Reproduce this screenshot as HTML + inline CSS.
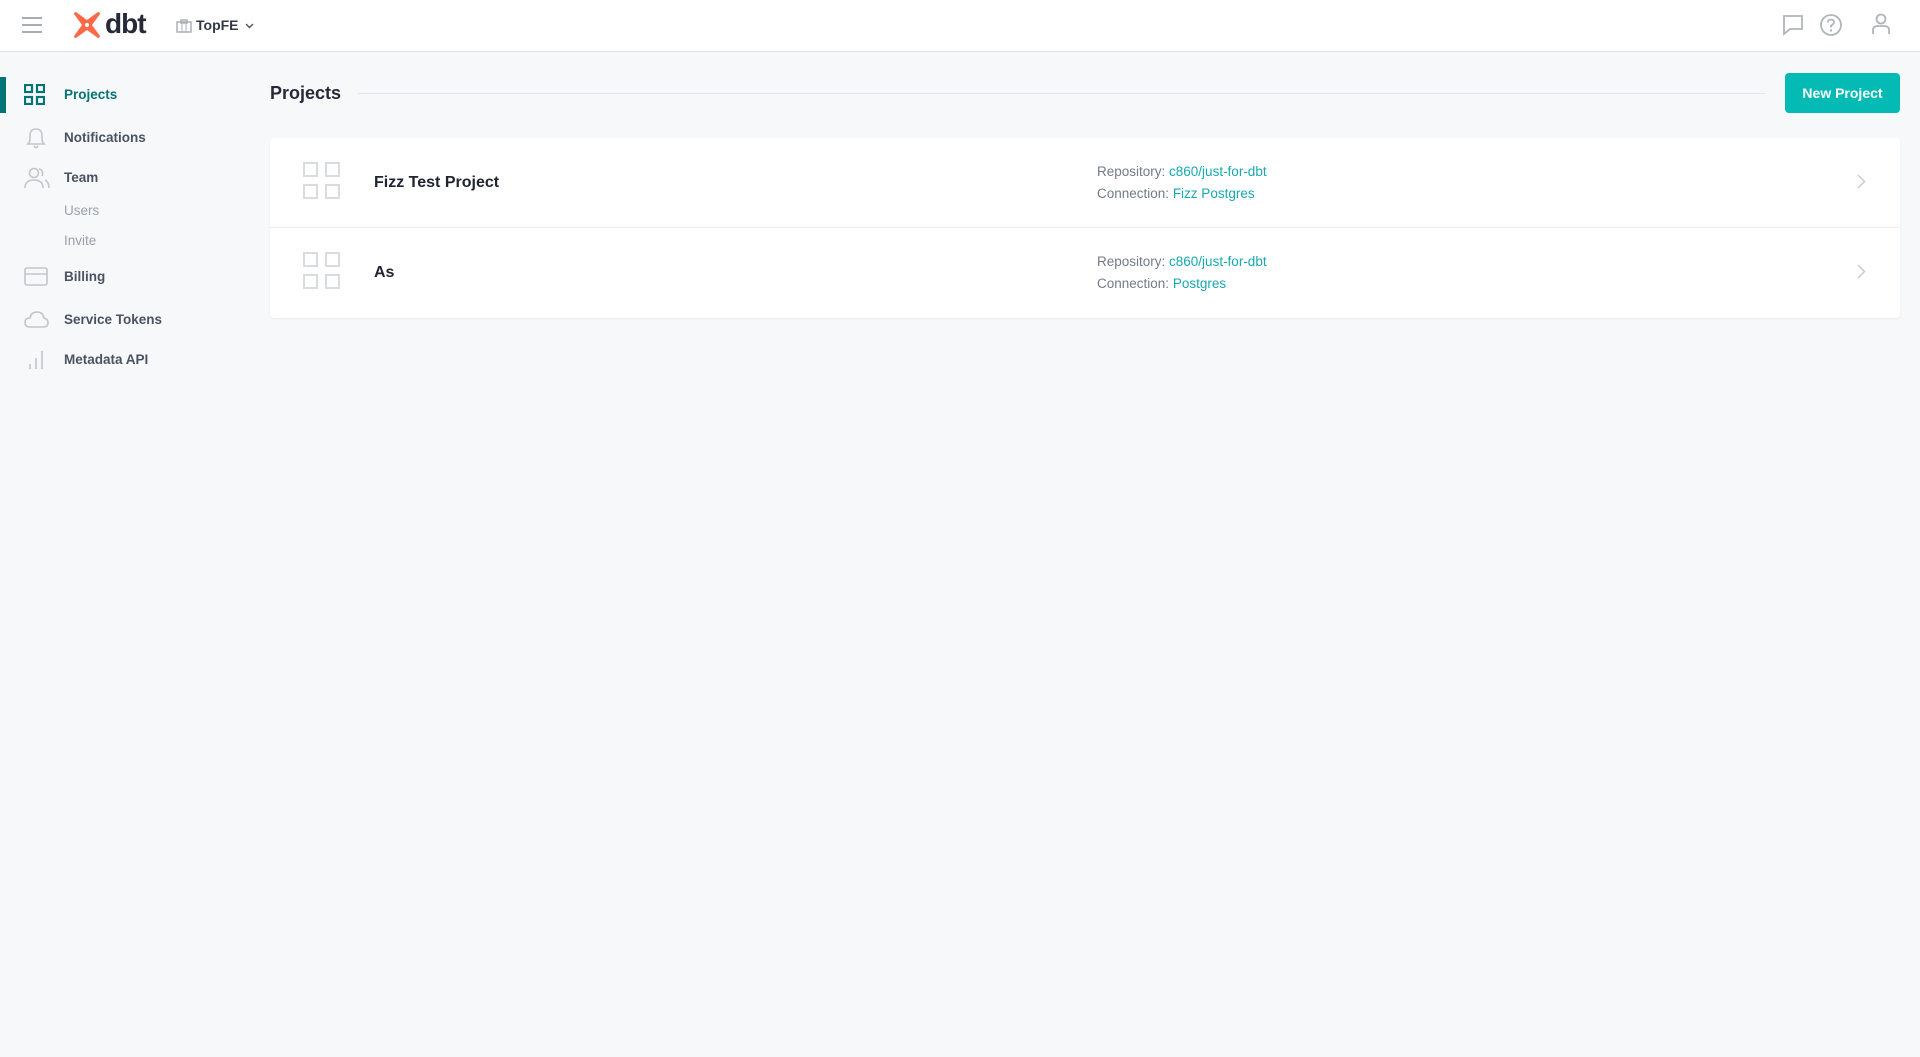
<!DOCTYPE html>
<html><head><meta charset="utf-8"><style>
*{box-sizing:border-box;margin:0;padding:0}
body{width:1920px;height:1057px;background:#f7f8fa;font-family:"Liberation Sans",sans-serif;position:relative;overflow:hidden;color:#262a38}
.hdr{position:absolute;left:0;top:0;width:1920px;height:52px;background:#fff;border-bottom:1px solid #dfe1e4}
.abs{position:absolute}
.nav{position:absolute;left:64px;font-size:13.5px;color:#4a5361;font-weight:bold}
.sub{position:absolute;left:64px;font-size:13.5px;color:#9aa1ab}
.ico{position:absolute;left:24px}
.card{position:absolute;left:270px;top:138px;width:1630px;height:180px;background:#fff;border-radius:4px;box-shadow:0 1px 2px rgba(0,0,0,.06)}
.row{position:absolute;left:0;width:1630px;height:90px}
.pname{position:absolute;left:104px;top:36px;font-size:16px;font-weight:bold;color:#1f2430}
.meta{position:absolute;left:827px;font-size:13.5px;color:#737b87}
.meta a{color:#17a9b1;text-decoration:none}
.sq{position:absolute;width:15px;height:15px;border:2px solid #d8dbdf}
</style></head><body>
<div class="hdr">
<svg class="abs" style="left:22px;top:16px" width="20" height="18"><g stroke="#a8adb4" stroke-width="2"><line x1="0" y1="2" x2="20" y2="2"/><line x1="0" y1="9" x2="20" y2="9"/><line x1="0" y1="16" x2="20" y2="16"/></g></svg>
<svg class="abs" style="left:73px;top:11px" width="28" height="28" viewBox="0 0 28 28"><path d="M3 1 Q1 1 1 3 L9 14 L1 25 Q1 27 3 27 L14 19 L25 27 Q27 27 27 25 L19 14 L27 3 Q27 1 25 1 L14 9 Z" fill="#fe6a48"/><circle cx="14" cy="14" r="2" fill="#fff"/></svg>
<div class="abs" style="left:105px;top:8px;font-size:28px;font-weight:bold;color:#262a38;letter-spacing:-1px">dbt</div>
<svg class="abs" style="left:176px;top:19px" width="16" height="14"><rect x="1" y="3" width="14" height="10" fill="none" stroke="#aab0b7" stroke-width="1.5"/><rect x="5" y="1" width="6" height="3" fill="none" stroke="#aab0b7" stroke-width="1.5"/><line x1="6" y1="4" x2="6" y2="13" stroke="#aab0b7"/><line x1="10" y1="4" x2="10" y2="13" stroke="#aab0b7"/></svg>
<div class="abs" style="left:196px;top:17px;font-size:14px;font-weight:bold;color:#333a45">TopFE</div>
<svg class="abs" style="left:245px;top:23px" width="9" height="6"><path d="M1 1 L4.5 4.5 L8 1" fill="none" stroke="#555" stroke-width="1.4"/></svg>
<svg class="abs" style="left:1782px;top:14px" width="22" height="22"><path d="M2 2 H20 V15 H8 L2 20 Z" fill="none" stroke="#b0b5bb" stroke-width="1.8"/></svg>
<svg class="abs" style="left:1819px;top:13px" width="24" height="24"><circle cx="12" cy="12" r="10" fill="none" stroke="#b0b5bb" stroke-width="1.8"/><path d="M9 9.5 Q9 6.5 12 6.5 Q15 6.5 15 9.2 Q15 11 12 12.5 V14.5" fill="none" stroke="#b0b5bb" stroke-width="1.8"/><circle cx="12" cy="17.5" r="1.2" fill="#b0b5bb"/></svg>
<svg class="abs" style="left:1871px;top:13px" width="20" height="22"><circle cx="10" cy="6" r="4.5" fill="none" stroke="#b0b5bb" stroke-width="1.8"/><path d="M2 21 V17 Q2 13 7 13 H13 Q18 13 18 17 V21" fill="none" stroke="#b0b5bb" stroke-width="1.8"/></svg>
</div>

<div class="abs" style="left:0;top:77px;width:6px;height:36px;background:#047377"></div>
<svg class="ico" style="top:84px" width="21" height="21"><g fill="none" stroke="#047377" stroke-width="2.2"><rect x="1" y="1" width="7" height="7"/><rect x="13" y="1" width="7" height="7"/><rect x="1" y="13" width="7" height="7"/><rect x="13" y="13" width="7" height="7"/></g></svg>
<div class="nav" style="top:87px;color:#047377">Projects</div>
<svg class="ico" style="top:126px" width="24" height="24"><path d="M4 18 Q6 16 6 12 V10 Q6 3 12 3 Q18 3 18 10 V12 Q18 16 20 18 Z M10 20 Q12 23 14 20" fill="none" stroke="#c2c6cb" stroke-width="1.6"/></svg>
<div class="nav" style="top:130px">Notifications</div>
<svg class="ico" style="top:167px" width="26" height="22"><g fill="none" stroke="#c2c6cb" stroke-width="1.6"><circle cx="10" cy="6" r="4.5"/><path d="M1 21 Q1 13 10 13 Q19 13 19 21"/><path d="M15 2 Q20 3 18 9 M21 13 Q25 15 25 21"/></g></svg>
<div class="nav" style="top:170px">Team</div>
<div class="sub" style="top:203px">Users</div>
<div class="sub" style="top:233px">Invite</div>
<svg class="ico" style="top:267px" width="24" height="20"><rect x="1" y="1" width="22" height="17" rx="2" fill="none" stroke="#c2c6cb" stroke-width="1.6"/><line x1="1" y1="7" x2="23" y2="7" stroke="#c2c6cb" stroke-width="1.6"/></svg>
<div class="nav" style="top:269px">Billing</div>
<svg class="ico" style="top:311px" width="25" height="18"><path d="M6 16 Q1 16 1 11.5 Q1 7 6 7 Q7 1 13 1 Q19 1 20 7 Q24 8 24 12 Q24 16 19 16 Z" fill="none" stroke="#c2c6cb" stroke-width="1.6"/></svg>
<div class="nav" style="top:312px">Service Tokens</div>
<svg class="ico" style="top:350px" width="24" height="20"><g stroke="#c2c6cb" stroke-width="1.6"><line x1="6" y1="19" x2="6" y2="14"/><line x1="12" y1="19" x2="12" y2="8"/><line x1="18" y1="19" x2="18" y2="1"/></g></svg>
<div class="nav" style="top:352px">Metadata API</div>

<div class="abs" style="left:270px;top:83px;font-size:18px;font-weight:bold;color:#262a38">Projects</div>
<div class="abs" style="left:358px;top:93px;width:1407px;height:1px;background:#e2e4e7"></div>
<div class="abs" style="left:1785px;top:73px;width:115px;height:40px;background:#04bab5;border-radius:4px;color:#fff;font-size:14px;font-weight:bold;text-align:center;line-height:40px">New Project</div>

<div class="card">
<div class="row" style="top:0;border-bottom:1px solid #eceef0">
<div class="sq" style="left:33px;top:24px"></div><div class="sq" style="left:55px;top:24px"></div><div class="sq" style="left:33px;top:46px"></div><div class="sq" style="left:55px;top:46px"></div>
<div class="pname">Fizz Test Project</div>
<div class="meta" style="top:26px">Repository: <a>c860/just-for-dbt</a></div>
<div class="meta" style="top:48px">Connection: <a>Fizz Postgres</a></div>
<svg class="abs" style="left:1587px;top:36px" width="9" height="15"><path d="M1 1 L7.5 7.5 L1 14" fill="none" stroke="#c8ccd0" stroke-width="1.5"/></svg>
</div>
<div class="row" style="top:90px">
<div class="sq" style="left:33px;top:24px"></div><div class="sq" style="left:55px;top:24px"></div><div class="sq" style="left:33px;top:46px"></div><div class="sq" style="left:55px;top:46px"></div>
<div class="pname">As</div>
<div class="meta" style="top:26px">Repository: <a>c860/just-for-dbt</a></div>
<div class="meta" style="top:48px">Connection: <a>Postgres</a></div>
<svg class="abs" style="left:1587px;top:36px" width="9" height="15"><path d="M1 1 L7.5 7.5 L1 14" fill="none" stroke="#c8ccd0" stroke-width="1.5"/></svg>
</div>
</div>
</body></html>
